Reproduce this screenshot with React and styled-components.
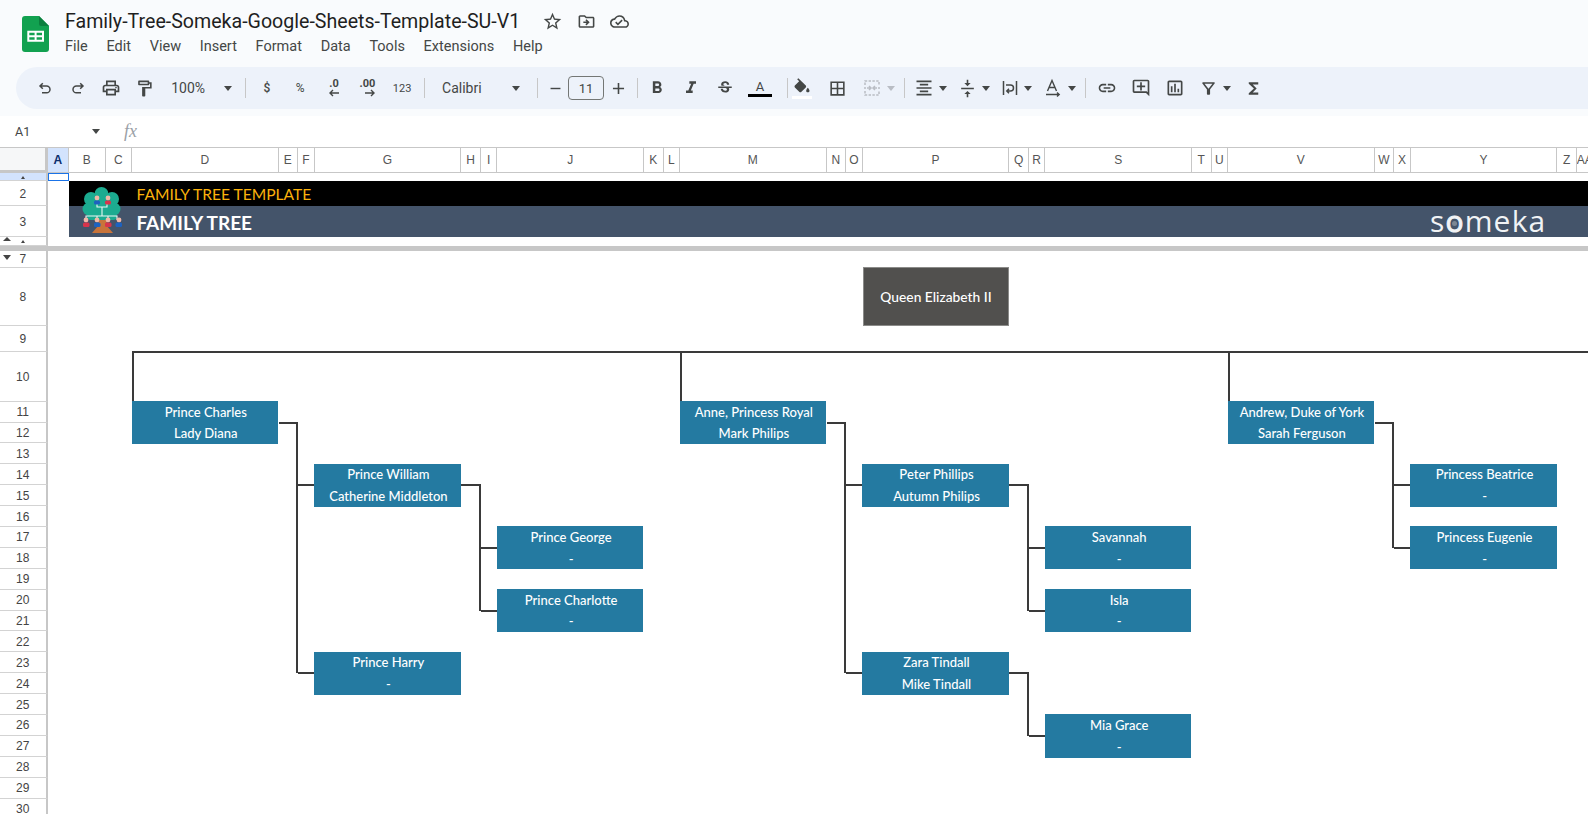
import styled, { createGlobalStyle } from "styled-components"
import {
  MdOutlineStarBorder, MdOutlineDriveFileMove, MdOutlineCloudDone, MdOutlinePrint,
  MdOutlineFormatPaint, MdRemove, MdAdd, MdFormatBold, MdFormatItalic, MdStrikethroughS,
  MdBorderAll, MdFormatAlignCenter, MdVerticalAlignCenter, MdLink, MdOutlineAddComment, MdOutlineInsertChart,
  MdOutlineFilterAlt, MdFunctions,
} from "react-icons/md"

const COLUMNS = ["A","B","C","D","E","F","G","H","I","J","K","L","M","N","O","P","Q","R","S","T","U","V","W","X","Y","Z","AA"]
const colLine = (name) => COLUMNS.indexOf(name) + 2
const rowLine = (n) => n - 6

const SHEET_COLS = `47.5px 21.5px 36.5px 26.5px repeat(8, 146.5px 19.7px 16.5px)`
const SCROLL_ROWS = `17.3px 58px 25.7px 50px repeat(21, 20.9px)`

const GlobalStyle = createGlobalStyle`
  html, body { margin: 0; padding: 0; background: #f9fbfd; }
  * { box-sizing: border-box; }
`

const TREE = [
  { col: "D", row: 11, lines: ["Prince Charles", "Lady Diana"] },
  { col: "G", row: 14, lines: ["Prince William", "Catherine Middleton"] },
  { col: "J", row: 17, lines: ["Prince George", "-"] },
  { col: "J", row: 20, lines: ["Prince Charlotte", "-"] },
  { col: "G", row: 23, lines: ["Prince Harry", "-"] },
  { col: "M", row: 11, lines: ["Anne, Princess Royal", "Mark Philips"] },
  { col: "P", row: 14, lines: ["Peter Phillips", "Autumn Philips"] },
  { col: "S", row: 17, lines: ["Savannah", "-"] },
  { col: "S", row: 20, lines: ["Isla", "-"] },
  { col: "P", row: 23, lines: ["Zara Tindall", "Mike Tindall"] },
  { col: "S", row: 26, lines: ["Mia Grace", "-"] },
  { col: "V", row: 11, lines: ["Andrew, Duke of York", "Sarah Ferguson"] },
  { col: "Y", row: 14, lines: ["Princess Beatrice", "-"] },
  { col: "Y", row: 17, lines: ["Princess Eugenie", "-"] },
]

// cell borders, the way the template draws them
const LINES = [
  { col: "D", row: 10, toEnd: true, top: true, left: true },
  { col: "M", row: 10, left: true },
  { col: "V", row: 10, left: true },
  { col: "E", row: 12, rows: 12, top: true, right: true },
  { col: "F", row: 15, top: true },
  { col: "F", row: 24, top: true },
  { col: "H", row: 15, rows: 6, top: true, right: true },
  { col: "I", row: 18, top: true },
  { col: "I", row: 21, top: true },
  { col: "N", row: 12, rows: 12, top: true, right: true },
  { col: "O", row: 15, top: true },
  { col: "O", row: 24, top: true },
  { col: "Q", row: 15, rows: 6, top: true, right: true },
  { col: "R", row: 18, top: true },
  { col: "R", row: 21, top: true },
  { col: "Q", row: 24, rows: 3, top: true, right: true },
  { col: "R", row: 27, top: true },
  { col: "W", row: 12, rows: 6, top: true, right: true },
  { col: "X", row: 15, top: true },
  { col: "X", row: 18, top: true },
]

const MENU = ["File", "Edit", "View", "Insert", "Format", "Data", "Tools", "Extensions", "Help"]
const ROW_NUMBERS = Array.from({ length: 24 }, (_, i) => i + 7)

const SheetsLogo = () => (
  <svg width="27" height="36" viewBox="0 0 27 36">
    <path d="M3 0H17L27 10V33a3 3 0 0 1-3 3H3a3 3 0 0 1-3-3V3a3 3 0 0 1 3-3z" fill="#12a150" />
    <path d="M17 0L27 10H19a2 2 0 0 1-2-2z" fill="#0b7f3e" />
    <path d="M6.3 15.7H21v9H6.3zM13.6 15.7v9M6.3 20.2H21" fill="none" stroke="#fff" strokeWidth="2" />
  </svg>
)

const TreeLogo = () => (
  <svg width="40" height="47" viewBox="0 0 40 47">
    <path d="M17 28h7l1 11 6 7H10l6-7z" fill="#c8743a" />
    <g fill="#1cab90">
      <circle cx="19.5" cy="7" r="7" />
      <circle cx="9" cy="12" r="7" />
      <circle cx="30" cy="12" r="7" />
      <circle cx="7" cy="22" r="6.5" />
      <circle cx="32" cy="22" r="6.5" />
      <rect x="5" y="8" width="30" height="25" rx="4" />
    </g>
    <path d="M20 20v5M15 16v4h10v-4M4 33v-4h31v4M15 33v-4M26 33v-4M20 25v4" fill="none" stroke="#e9f7f4" strokeWidth="1.1" />
    <circle cx="15" cy="11" r="2.4" fill="#f2b8a8" />
    <rect x="12" y="13.5" width="6" height="4" rx="1.5" fill="#1d62c0" />
    <circle cx="26" cy="11" r="2.4" fill="#f2b8a8" />
    <rect x="23" y="13.5" width="6" height="4" rx="1.5" fill="#d8344c" />
    <circle cx="4" cy="33" r="2.4" fill="#f2b8a8" />
    <rect x="1" y="35.5" width="6.5" height="4.5" rx="1.5" fill="#d8344c" />
    <circle cx="15" cy="33" r="2.4" fill="#f2b8a8" />
    <rect x="12" y="35.5" width="6.5" height="4.5" rx="1.5" fill="#1d62c0" />
    <circle cx="26" cy="33" r="2.4" fill="#f2b8a8" />
    <rect x="23" y="35.5" width="6.5" height="4.5" rx="1.5" fill="#d8344c" />
    <circle cx="37" cy="33" r="2.4" fill="#f2b8a8" />
    <rect x="33.5" y="35.5" width="6.5" height="4.5" rx="1.5" fill="#1d62c0" />
  </svg>
)

const UndoIcon = ({ flip }) => (
  <svg width="16" height="16" viewBox="0 0 16 16" fill="none" stroke="#444746" strokeWidth="1.5"
    transform={flip ? "scale(-1 1)" : undefined}>
    <path d="M3 6h6.6a3.4 3.4 0 0 1 0 6.8H5M5.8 3.2L3 6l2.8 2.8" />
  </svg>
)

const FillIcon = () => (
  <svg width="20" height="17" viewBox="0 0 24 20" fill="#444746">
    <path d="M16.56 8.94L7.62 0 6.21 1.41l2.38 2.38-5.15 5.15c-.59.59-.59 1.54 0 2.12l5.5 5.5c.29.29.68.44 1.06.44s.77-.15 1.06-.44l5.5-5.5c.59-.58.59-1.53 0-2.12zM19 11.5s-2 2.17-2 3.5c0 1.1.9 2 2 2s2-.9 2-2c0-1.33-2-3.5-2-3.5z" />
  </svg>
)

const MergeIcon = () => (
  <svg width="20" height="20" viewBox="0 0 20 20" fill="none" stroke="#b9bdc4" strokeWidth="1.5">
    <path d="M3 7V3h14v4M3 13v4h14v-4M3 9v2M17 9v2" strokeDasharray="2.4 1.4" />
    <path d="M5 10h3M15 10h-3M7 8l2 2-2 2M13 8l-2 2 2 2" />
  </svg>
)

const WrapIcon = () => (
  <svg width="18" height="18" viewBox="0 0 18 18" fill="none" stroke="#444746" strokeWidth="1.5">
    <path d="M2.5 2v14M15.5 2v14M5 6h4.5a3 3 0 0 1 0 6H6M8 9.8L5.8 12 8 14.2" />
  </svg>
)

const RotateIcon = () => (
  <svg width="20" height="20" viewBox="0 0 20 20" fill="none" stroke="#444746" strokeWidth="1.4">
    <path d="M4.5 13L9 2.5 13.5 13M6 9.5h6M3 16.5h13M14 14.5l2.2 2-2.2 2" />
  </svg>
)

const DecimalArrow = ({ flip }) => (
  <svg width="10" height="8" viewBox="0 0 10 8" fill="none" stroke="#444746" strokeWidth="1.4">
    {flip ? <path d="M0 4h9M6 1l3 3-3 3" /> : <path d="M10 4H1M4 1L1 4l3 3" />}
  </svg>
)

export default function App() {
  return (
    <Page>
      <GlobalStyle />
      <TitleBar>
        <LogoSlot><SheetsLogo /></LogoSlot>
        <TitleBlock>
          <TitleRow>
            <DocTitle>Family-Tree-Someka-Google-Sheets-Template-SU-V1</DocTitle>
            <TitleIcons>
              <MdOutlineStarBorder size={21} />
              <MdOutlineDriveFileMove size={19} />
              <MdOutlineCloudDone size={19} />
            </TitleIcons>
          </TitleRow>
          <MenuBar>
            {MENU.map((m) => <MenuItem key={m}>{m}</MenuItem>)}
          </MenuBar>
        </TitleBlock>
      </TitleBar>

      <Toolbar>
        <ToolBtn><UndoIcon /></ToolBtn>
        <ToolBtn><UndoIcon flip /></ToolBtn>
        <ToolBtn><MdOutlinePrint size={20} /></ToolBtn>
        <ToolBtn><MdOutlineFormatPaint size={19} /></ToolBtn>
        <SelectBtn $w={80} $pad={10}>100%<Caret /></SelectBtn>
        <Sep />
        <ToolBtn><SmallText $bold>$</SmallText></ToolBtn>
        <ToolBtn><SmallText>%</SmallText></ToolBtn>
        <ToolBtn $w={34}><DecimalStack>.0<DecimalArrow /></DecimalStack></ToolBtn>
        <ToolBtn><DecimalStack>.00<DecimalArrow flip /></DecimalStack></ToolBtn>
        <ToolBtn $w={36}><SmallText $size={11}>123</SmallText></ToolBtn>
        <Sep />
        <SelectBtn $w={104} $pad={13} $tail={13}>Calibri<Caret /></SelectBtn>
        <Sep />
        <ToolBtn $w={26}><MdRemove size={17} /></ToolBtn>
        <SizeBox>11</SizeBox>
        <ToolBtn $w={29}><MdAdd size={19} /></ToolBtn>
        <Sep $right={2} />
        <ToolBtn><MdFormatBold size={20} /></ToolBtn>
        <ToolBtn $w={35}><MdFormatItalic size={20} /></ToolBtn>
        <ToolBtn $w={33}><MdStrikethroughS size={18} /></ToolBtn>
        <ToolBtn $w={37}><TextColor>A</TextColor></ToolBtn>
        <Sep $left={9} $right={-3} />
        <ToolBtn $w={33}><FillStack><FillIcon /></FillStack></ToolBtn>
        <ToolBtn $w={38}><MdBorderAll size={19} /></ToolBtn>
        <DropBtn $w={44}><MergeIcon /><Caret $faint /></DropBtn>
        <Sep />
        <DropBtn><MdFormatAlignCenter size={20} /><Caret /></DropBtn>
        <DropBtn><MdVerticalAlignCenter size={19} /><Caret /></DropBtn>
        <DropBtn><WrapIcon /><Caret /></DropBtn>
        <DropBtn><RotateIcon /><Caret /></DropBtn>
        <Sep />
        <ToolBtn $w={34}><MdLink size={20} /></ToolBtn>
        <ToolBtn $w={34}><MdOutlineAddComment size={20} /></ToolBtn>
        <ToolBtn $w={33}><MdOutlineInsertChart size={20} /></ToolBtn>
        <DropBtn $w={47}><MdOutlineFilterAlt size={19} /><Caret /></DropBtn>
        <ToolBtn $w={30}><MdFunctions size={19} /></ToolBtn>
      </Toolbar>

      <FormulaBar>
        <NameBox>A1<Caret /></NameBox>
        <FxMark>fx</FxMark>
      </FormulaBar>

      <ColumnHeader>
        <Corner />
        {COLUMNS.map((c) => <ColumnCell key={c} $selected={c === "A"}>{c}</ColumnCell>)}
      </ColumnHeader>

      <FrozenPane>
        <RowHead $line={1} $selected><Tiny /></RowHead>
        <RowHead $line={2}>2</RowHead>
        <RowHead $line={3}>3</RowHead>
        <RowHead $line={4}><HideArrow $up /><Tiny /></RowHead>
        <ActiveCell />
        <BannerTop>
          <BannerKicker>FAMILY TREE TEMPLATE</BannerKicker>
        </BannerTop>
        <BannerBottom>
          <BannerTitle>FAMILY TREE</BannerTitle>
          <Someka>s<SomekaO>o</SomekaO>meka</Someka>
        </BannerBottom>
        <TreeSlot><TreeLogo /></TreeSlot>
      </FrozenPane>

      <FreezeBar />

      <ScrollPane>
        {ROW_NUMBERS.map((n) => (
          <RowHead key={n} $line={rowLine(n)}>
            {n === 7 && <HideArrow />}
            {n}
          </RowHead>
        ))}
        {LINES.map((l, i) => (
          <Connector
            key={i}
            $col={l.col}
            $row={l.row}
            $rows={l.rows || 1}
            $toEnd={l.toEnd}
            $top={l.top}
            $left={l.left}
            $right={l.right}
          />
        ))}
        <QueenBox>Queen Elizabeth II</QueenBox>
        {TREE.map((p) => (
          <PersonBox key={p.lines[0]} $col={p.col} $row={p.row}>
            {p.lines.map((t, i) => <PersonLine key={i}>{t}</PersonLine>)}
          </PersonBox>
        ))}
      </ScrollPane>
    </Page>
  )
}

const Page = styled.div`
  width: 1588px;
  height: 814px;
  overflow: hidden;
  background: #f9fbfd;
  display: flex;
  flex-direction: column;
  font-family: Roboto, "Liberation Sans", sans-serif;
  color: #444746;
`

const TitleBar = styled.div`
  height: 67px;
  flex: none;
  display: flex;
  padding: 7px 0 0 22px;
`

const LogoSlot = styled.div`
  margin: 9px 16px 0 0;
  height: 36px;
`

const TitleBlock = styled.div`
  display: flex;
  flex-direction: column;
`

const TitleRow = styled.div`
  display: flex;
  align-items: center;
  height: 28px;
`

const DocTitle = styled.div`
  font-size: 19.6px;
  color: #1f1f1f;
`

const TitleIcons = styled.div`
  display: flex;
  align-items: center;
  gap: 14px;
  margin-left: 22px;
`

const MenuBar = styled.div`
  display: flex;
  gap: 18.7px;
  height: 22px;
  align-items: center;
`

const MenuItem = styled.span`
  font-size: 14.5px;
  color: #444746;
`

const Toolbar = styled.div`
  height: 42px;
  flex: none;
  margin-left: 16px;
  padding-left: 12px;
  background: #edf2fa;
  border-radius: 21px 0 0 21px;
  display: flex;
  align-items: center;
`

const ToolBtn = styled.div`
  width: ${(p) => p.$w || 33.3}px;
  height: 28px;
  flex: none;
  display: flex;
  align-items: center;
  justify-content: center;
  color: #444746;
`

const DropBtn = styled(ToolBtn)`
  width: ${(p) => p.$w || 43}px;
  gap: 5px;
`

const SelectBtn = styled.div`
  width: ${(p) => p.$w}px;
  padding: 0 ${(p) => p.$tail || 9}px 0 ${(p) => p.$pad}px;
  flex: none;
  display: flex;
  align-items: center;
  justify-content: space-between;
  font-size: 14px;
  color: #444746;
`

const Caret = styled.span`
  flex: none;
  width: 0;
  height: 0;
  border-left: 4.5px solid transparent;
  border-right: 4.5px solid transparent;
  border-top: 5px solid ${(p) => (p.$faint ? "#b9bdc4" : "#444746")};
`

const Sep = styled.div`
  width: 1px;
  height: 20px;
  flex: none;
  margin: 0 ${(p) => p.$right ?? 4}px 0 ${(p) => p.$left || 4}px;
  background: #c7c7c7;
`

const SmallText = styled.span`
  font-size: ${(p) => p.$size || 12}px;
  font-weight: ${(p) => (p.$bold ? 500 : 400)};
`

const DecimalStack = styled.span`
  display: flex;
  flex-direction: column;
  align-items: flex-end;
  font-size: 11px;
  font-weight: 700;
  line-height: 10px;
`

const SizeBox = styled.div`
  width: 36px;
  height: 24px;
  flex: none;
  border: 1px solid #747775;
  border-radius: 4px;
  display: flex;
  align-items: center;
  justify-content: center;
  font-size: 13px;
`

const TextColor = styled.span`
  width: 24px;
  text-align: center;
  font-size: 13px;
  line-height: 15px;
  border-bottom: 3px solid #000;
`

const FillStack = styled.span`
  display: flex;
  padding-bottom: 1px;
  border-bottom: 3px solid #fff;
`

const FormulaBar = styled.div`
  height: 31px;
  flex: none;
  margin-top: 7px;
  background: #fff;
  display: flex;
  align-items: center;
  padding-left: 15px;
`

const NameBox = styled.div`
  width: 85px;
  display: flex;
  align-items: center;
  justify-content: space-between;
  font-size: 12.5px;
  color: #444746;
`

const FxMark = styled.span`
  margin-left: 24px;
  font: italic 18px "Liberation Serif", serif;
  color: #9aa0a6;
`

const ColumnHeader = styled.div`
  height: 26px;
  flex: none;
  display: grid;
  grid-template-columns: ${SHEET_COLS};
  border-top: 1px solid #c7c7c7;
  background: #fff;
`

const Corner = styled.div`
  background: #f6f7f8;
  border-right: 3px solid #c7c7c7;
  border-bottom: 3px solid #c7c7c7;
`

const ColumnCell = styled.div`
  display: flex;
  align-items: center;
  justify-content: center;
  overflow: hidden;
  white-space: nowrap;
  font: ${(p) => (p.$selected ? 700 : 400)} 12px "Liberation Sans", sans-serif;
  color: ${(p) => (p.$selected ? "#0b2d6b" : "#555")};
  background: ${(p) => (p.$selected ? "#d3e3fd" : "#fff")};
  border-right: 1px solid #c7c7c7;
  border-bottom: 1px solid #c7c7c7;
`

const FrozenPane = styled.div`
  height: 73.3px;
  flex: none;
  display: grid;
  grid-template-columns: ${SHEET_COLS};
  grid-template-rows: 8px 25.3px 31px 9px;
  background: #fff;
`

const RowHead = styled.div`
  grid-column: 1;
  grid-row: ${(p) => p.$line};
  position: relative;
  display: flex;
  align-items: center;
  justify-content: center;
  padding-top: 1px;
  overflow: hidden;
  font: 12px "Liberation Sans", sans-serif;
  color: #444;
  background: ${(p) => (p.$selected ? "#d3e3fd" : "#fff")};
  border-right: 2px solid #c7c7c7;
  border-bottom: 1px solid #d3d3d3;
`

const HideArrow = styled.span`
  position: absolute;
  left: 3px;
  top: ${(p) => (p.$up ? 0 : 4)}px;
  width: 0;
  height: 0;
  border-left: 4px solid transparent;
  border-right: 4px solid transparent;
  ${(p) => (p.$up ? "border-bottom: 4px solid #444;" : "border-top: 5px solid #444;")}
`

const Tiny = styled.span`
  width: 0;
  height: 0;
  border-left: 2px solid transparent;
  border-right: 2px solid transparent;
  border-bottom: 3px solid #444;
`

const ActiveCell = styled.div`
  grid-column: ${colLine("A")};
  grid-row: 1;
  border: 1.5px solid #1a73e8;
`

const BannerTop = styled.div`
  grid-column: ${colLine("B")} / -1;
  grid-row: 2;
  background: #000;
  display: flex;
  align-items: center;
  padding-left: 67.5px;
`

const BannerBottom = styled.div`
  grid-column: ${colLine("B")} / -1;
  grid-row: 3;
  background: #44546a;
  display: flex;
  align-items: center;
  justify-content: space-between;
  padding: 1px 47px 0 67.5px;
`

const BannerKicker = styled.span`
  font: 15.6px Lato, sans-serif;
  color: #fbb20c;
`

const BannerTitle = styled.span`
  font: 700 19px Lato, sans-serif;
  color: #fff;
`

const Someka = styled.span`
  margin-bottom: 4px;
  font: 500 30px "Open Sans", sans-serif;
  letter-spacing: 1.2px;
  color: #f1f3f5;
`

const SomekaO = styled.span`
  position: relative;
  -webkit-text-stroke: 1px #f1f3f5;
  &::after {
    content: "";
    position: absolute;
    left: 6.5px;
    top: 21.5px;
    width: 5px;
    height: 5px;
    border-radius: 50%;
    background: #7c8794;
  }
`

const TreeSlot = styled.div`
  grid-column: ${colLine("B")} / span 3;
  grid-row: 2 / 4;
  margin: 6px 0 0 13px;
`

const FreezeBar = styled.div`
  height: 4.4px;
  flex: none;
  background: #c7c7c7;
`

const ScrollPane = styled.div`
  flex: 1;
  min-height: 0;
  display: grid;
  grid-template-columns: ${SHEET_COLS};
  grid-template-rows: ${SCROLL_ROWS};
  background: #fff;
`

const Connector = styled.div`
  grid-column: ${(p) => colLine(p.$col)} / ${(p) => (p.$toEnd ? "-1" : "span 1")};
  grid-row: ${(p) => rowLine(p.$row)} / span ${(p) => p.$rows};
  margin-top: -1px;
  ${(p) => p.$top && "border-top: 2px solid #3a3a3a;"}
  ${(p) => p.$left && "border-left: 2px solid #3a3a3a;"}
  ${(p) => p.$right && "border-right: 2px solid #3a3a3a;"}
`

const PersonBox = styled.div`
  grid-column: ${(p) => colLine(p.$col)};
  grid-row: ${(p) => rowLine(p.$row)} / span 2;
  position: relative;
  z-index: 1;
  margin: -0.7px 0.5px -0.7px -0.5px;
  display: flex;
  flex-direction: column;
  background: #247aa1;
`

const PersonLine = styled.div`
  flex: 1;
  display: flex;
  align-items: center;
  justify-content: center;
  padding-left: 2px;
  font: 500 13px Lato, sans-serif;
  color: #fff;
`

const QueenBox = styled.div`
  grid-column: ${colLine("P")};
  grid-row: ${rowLine(8)};
  margin-top: -1px;
  display: flex;
  align-items: center;
  justify-content: center;
  font: 500 13.8px Lato, sans-serif;
  color: #fff;
  background: #51504e;
  border: 1px solid #8b8b89;
`
